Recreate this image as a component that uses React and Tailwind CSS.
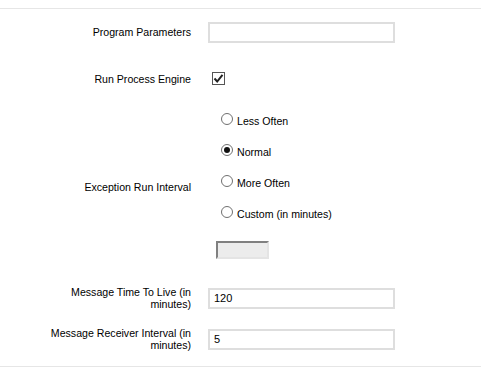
import React, { useState } from 'react';

const font = { fontFamily: '"Liberation Sans", Arial, sans-serif' };

const Label = ({ children }) => (
  <div className="w-[155px] shrink-0 text-right text-[10.6px] leading-[12px] text-black">{children}</div>
);

const Radio = ({ checked, label, onClick }) => (
  <div className="flex items-center h-[12px] cursor-pointer" onClick={onClick}>
    <span className="w-[12px] h-[12px] rounded-full border border-[#707070] bg-white flex items-center justify-center">
      {checked && <span className="w-[6px] h-[6px] rounded-full bg-[#111]" />}
    </span>
    <span className="ml-[4px] text-[10.6px] leading-[12px] mt-[4px] text-black">{label}</span>
  </div>
);

const App = () => {
  const [interval, setInterval] = useState('normal');
  const [engine, setEngine] = useState(true);

  return (
    <div className="w-[481px] h-[381px] bg-white" style={font}>
      <div className="h-[8px]" />
      <div className="border-t border-[#e6e6e6] pl-[36px]">
        <div className="h-[46px] flex items-center">
          <Label>Program Parameters</Label>
          <input className="ml-[17px] w-[187px] h-[21px] border-2 border-[#dedede] outline-none px-[4px] text-[11px]" />
        </div>

        <div className="h-[47px] flex items-center">
          <Label>Run Process Engine</Label>
          <div className="ml-[21px] w-[13px] h-[13px] border border-[#555] bg-white flex items-center justify-center cursor-pointer" onClick={() => setEngine(!engine)}>
            {engine && (
              <svg width="11" height="11" viewBox="0 0 11 11">
                <path d="M1.5 5.5 L4.2 8.5 L9.5 1.8" fill="none" stroke="#222" strokeWidth="2" />
              </svg>
            )}
          </div>
        </div>

        <div className="h-[169px] flex items-center">
          <Label>Exception Run Interval</Label>
          <div className="ml-[17px] flex flex-col -mt-[2px]">
            <div className="ml-[13px] flex flex-col gap-[19px]">
              <Radio label="Less Often" checked={interval === 'less'} onClick={() => setInterval('less')} />
              <Radio label="Normal" checked={interval === 'normal'} onClick={() => setInterval('normal')} />
              <Radio label="More Often" checked={interval === 'more'} onClick={() => setInterval('more')} />
              <Radio label="Custom (in minutes)" checked={interval === 'custom'} onClick={() => setInterval('custom')} />
            </div>
            <div className="ml-[8px] mt-[23px] w-[53px] h-[18px] bg-[#ececec] border-2 border-t-[#808080] border-l-[#808080] border-r-[#e4e4e4] border-b-[#e4e4e4]" />
          </div>
        </div>

        <div className="pt-[15px] pb-[8px] flex items-center">
          <Label>Message Time To Live (in minutes)</Label>
          <input defaultValue="120" className="ml-[17px] w-[187px] h-[21px] border-2 border-[#dedede] outline-none px-[4px] text-[11px] text-black" />
        </div>

        <div className="pt-[9px] pb-[15px] flex items-center">
          <Label>Message Receiver Interval (in minutes)</Label>
          <input defaultValue="5" className="ml-[17px] w-[187px] h-[21px] border-2 border-[#dedede] outline-none px-[4px] text-[11px] text-black" />
        </div>
      </div>
      <div className="border-t border-[#e6e6e6]" />
    </div>
  );
};

export default App;
